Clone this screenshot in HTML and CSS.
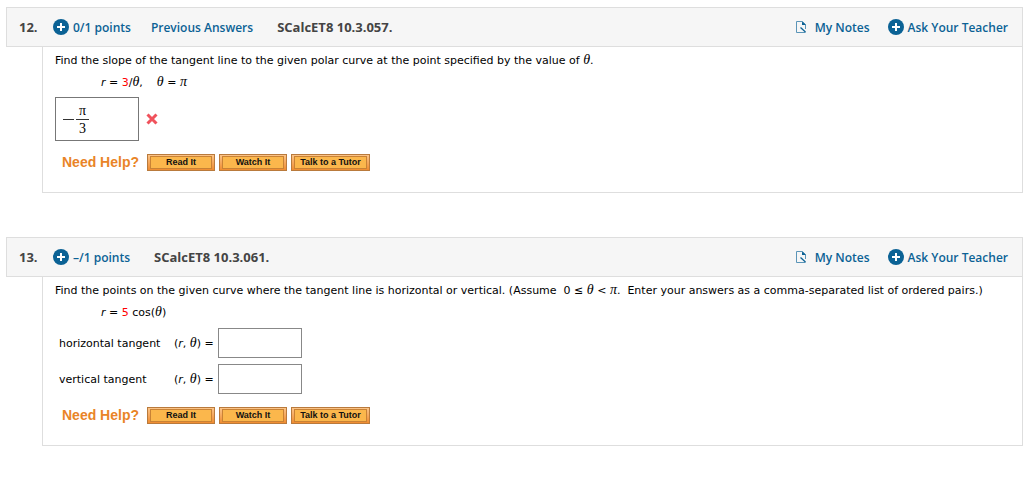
FILE: index.html
```
<!DOCTYPE html>
<html lang="en">
<head>
    <meta charset="UTF-8">
    <meta name="viewport" content="width=device-width, initial-scale=1.0">
    <title>Homework Questions</title>
    <link rel="stylesheet" href="styles.css">
</head>
<body>
    <!-- shared icons -->
    <svg class="sprite" aria-hidden="true">
        <symbol id="icon-plus" viewBox="0 0 16 16">
            <circle cx="8" cy="8" r="8" fill="#0b6295"/>
            <path d="M8 4v8M4 8h8" stroke="#fff" stroke-width="2"/>
        </symbol>
        <symbol id="icon-note" viewBox="0 0 11 12">
            <path d="M9.500 8V3.500l-3-3h-6v11h9" fill="none" stroke="#5b95b8"/>
            <path d="M6 .5v3.500h4z" fill="#0b6295"/>
            <path d="M4.500 6.500l5 4.500" stroke="#0b6295" stroke-width="1.300"/>
        </symbol>
    </svg>

    <section class="question">
        <header class="question-header">
            <span class="number">12.</span>
            <a href="#" class="points"><svg class="icon-plus"><use href="#icon-plus"/></svg>0/1 points</a>
            <a href="#" class="previous">Previous Answers</a>
            <strong class="source">SCalcET8 10.3.057.</strong>
            <nav class="tools">
                <a href="#" class="notes"><svg class="icon-note"><use href="#icon-note"/></svg>My Notes</a>
                <a href="#" class="ask"><svg class="icon-plus"><use href="#icon-plus"/></svg>Ask Your Teacher</a>
            </nav>
        </header>
        <div class="question-body">
            <p>Find the slope of the tangent line to the given polar curve at the point specified by the value of <i class="greek">θ</i>.</p>
            <p class="formula"><i>r</i> = <span class="value">3</span>/<i class="greek">θ</i>, &nbsp;&nbsp; <i class="greek">θ</i> = <i class="greek">π</i></p>
            <div class="answer">
                <div class="math-box" role="textbox" aria-label="Slope" tabindex="0">
                    <span class="minus"></span>
                    <span class="fraction"><span class="numerator">π</span><span>3</span></span>
                </div>
                <svg class="wrong" viewBox="0 0 12 12" role="img" aria-label="Incorrect"><path d="M1.500 1.500l9 9M10.500 1.500l-9 9" stroke="#f0525c" stroke-width="3"/></svg>
            </div>
            <div class="help">
                <span class="help-label">Need Help?</span>
                <button type="button"><span>Read It</span></button>
                <button type="button"><span>Watch It</span></button>
                <button type="button" class="wide"><span>Talk to a Tutor</span></button>
            </div>
        </div>
    </section>

    <section class="question">
        <header class="question-header">
            <span class="number">13.</span>
            <a href="#" class="points"><svg class="icon-plus"><use href="#icon-plus"/></svg>–/1 points</a>
            <strong class="source">SCalcET8 10.3.061.</strong>
            <nav class="tools">
                <a href="#" class="notes"><svg class="icon-note"><use href="#icon-note"/></svg>My Notes</a>
                <a href="#" class="ask"><svg class="icon-plus"><use href="#icon-plus"/></svg>Ask Your Teacher</a>
            </nav>
        </header>
        <div class="question-body">
            <p>Find the points on the given curve where the tangent line is horizontal or vertical. (Assume &nbsp;0 ≤ <i class="greek">θ</i> &lt; <i class="greek">π</i>. &nbsp;Enter your answers as a comma-separated list of ordered pairs.)</p>
            <p class="formula"><i>r</i> = <span class="value">5</span> cos(<i class="greek">θ</i>)</p>
            <div class="tangents">
                <label for="horizontal">horizontal tangent</label>
                <span>(<i>r</i>, <i class="greek">θ</i>) =</span>
                <input type="text" id="horizontal">
                <label for="vertical">vertical tangent</label>
                <span>(<i>r</i>, <i class="greek">θ</i>) =</span>
                <input type="text" id="vertical">
            </div>
            <div class="help">
                <span class="help-label">Need Help?</span>
                <button type="button"><span>Read It</span></button>
                <button type="button"><span>Watch It</span></button>
                <button type="button" class="wide"><span>Talk to a Tutor</span></button>
            </div>
        </div>
    </section>
</body>
</html>
```
FILE: styles.css
```
* {
    box-sizing: border-box;
}
body {
    margin: 7px 1px 0 6px;
    background: #fff;
    color: #000;
    font-family: Verdana, "DejaVu Sans", sans-serif;
    font-size: 11px;
}
.sprite {
    position: absolute;
    width: 0;
    height: 0;
}
.question {
    margin-bottom: 44px;
}
.question-header {
    display: flex;
    align-items: center;
    height: 40px;
    padding: 0 14px 0 12px;
    background: #f6f6f6;
    border: 1px solid #dedede;
    color: #444;
    font-family: "Open Sans", sans-serif;
    font-size: 13px;
}
.question-header a {
    display: flex;
    align-items: center;
    color: #0b6295;
    font-size: 12px;
    font-weight: 600;
    text-decoration: none;
}
.number {
    width: 34px;
    font-weight: 700;
}
.icon-plus {
    width: 16px;
    height: 16px;
    margin-right: 4px;
}
.icon-note {
    width: 11px;
    height: 12px;
    margin-right: 8px;
}
.previous {
    margin-left: 20px;
}
.source {
    margin-left: 24px;
    font-weight: 700;
}
.tools {
    display: flex;
    gap: 18px;
    margin-left: auto;
}
.question-body {
    margin-left: 36px;
    padding: 5px 12px 21px;
    border: 1px solid #dedede;
    border-top: 0;
}
.question-body p {
    margin: 0;
    line-height: 18px;
}
.question-body .formula {
    margin: 4px 0 5px 46px;
}
.greek {
    font-family: "Liberation Serif", serif;
    font-size: 14px;
    line-height: 1;
}
.value {
    color: #f00;
}
.answer {
    display: flex;
    align-items: center;
    gap: 7px;
}
.math-box {
    display: flex;
    align-items: center;
    gap: 2px;
    width: 84px;
    height: 44px;
    padding-left: 7px;
    border: 1px solid #777;
    font-family: "Liberation Serif", serif;
    font-size: 14px;
}
.minus {
    width: 11px;
    border-top: 1px solid #333;
}
.fraction {
    display: flex;
    flex-direction: column;
    width: 13px;
    line-height: 17px;
    text-align: center;
}
.numerator {
    border-bottom: 1px solid #333;
}
.wrong {
    width: 12px;
    height: 12px;
}
.tangents {
    display: grid;
    grid-template-columns: 115px 44px 84px;
    row-gap: 6px;
    align-items: center;
    margin: 6px 0 0 4px;
}
.tangents input {
    width: 84px;
    height: 30px;
    padding: 2px 4px;
    border: 1px solid #888;
    font: inherit;
}
.help {
    display: flex;
    align-items: center;
    gap: 4px;
    margin: 13px 0 0 7px;
}
.help-label {
    width: 81px;
    color: #e98427;
    font-family: "Liberation Sans", Arial, sans-serif;
    font-size: 14px;
    font-weight: 700;
    line-height: 17px;
}
.help button {
    width: 68px;
    height: 17px;
    padding: 1px 2px;
    background: linear-gradient(#fbc489, #f08c30);
    border: 1px solid #b97a3c;
    color: #111;
    font-family: "Liberation Sans", Arial, sans-serif;
    font-size: 9px;
    font-weight: 700;
}
.help button.wide {
    width: 79px;
}
.help button span {
    display: block;
    background: #fbb74c;
    border: 1px solid #c98235;
    line-height: 11px;
}
```
